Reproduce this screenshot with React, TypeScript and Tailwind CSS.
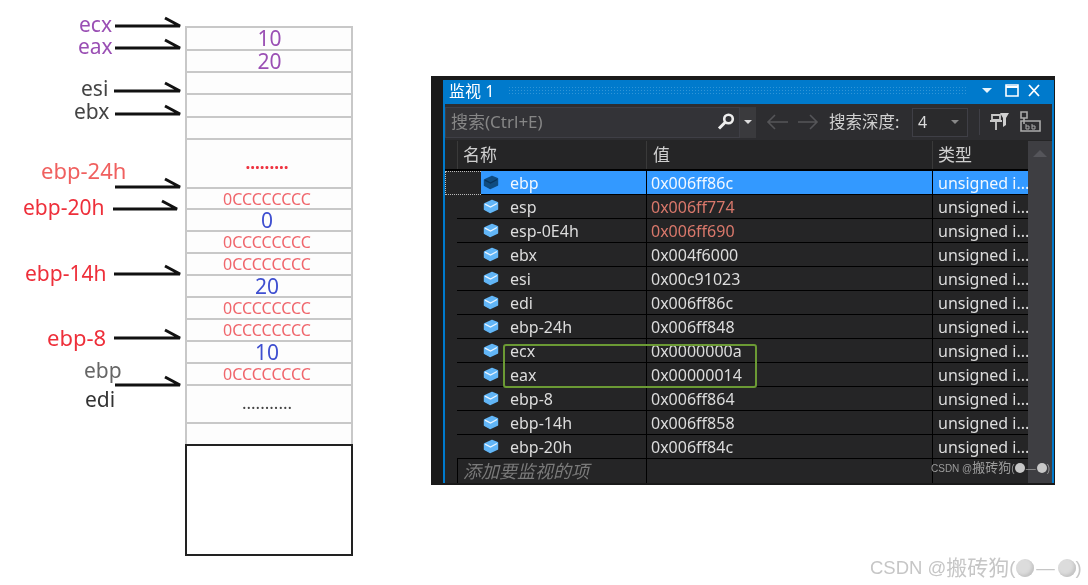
import React from "react";

const sans = "font-['Noto_Sans','Noto_Sans_CJK_SC',sans-serif]";

function Arrow({ y, x1 = 115, x2 = 180 }: { y: number; x1?: number; x2?: number }) {
  return (
    <svg className="absolute left-0 top-0" width="200" height="420" style={{ pointerEvents: "none" }}>
      <path d={`M${x1} ${y}H${x2}L${x2 - 15} ${y - 8}`} fill="none" stroke="#111" strokeWidth="3" />
    </svg>
  );
}

const labels: { t: string; cls: string }[] = [
  { t: "ecx", cls: "left-[79px] top-[14px] text-[21px] text-[#9a4fb4]" },
  { t: "eax", cls: "left-[78px] top-[36px] text-[21px] text-[#9a4fb4]" },
  { t: "esi", cls: "left-[81px] top-[78px] text-[21px] text-[#444]" },
  { t: "ebx", cls: "left-[74px] top-[101px] text-[21px] text-[#444]" },
  { t: "ebp-24h", cls: "left-[41px] top-[160px] text-[22px] text-[#f0605f]" },
  { t: "ebp-20h", cls: "left-[23px] top-[197px] text-[21px] text-[#ee2f3a]" },
  { t: "ebp-14h", cls: "left-[25px] top-[263px] text-[21px] text-[#ee2f3a]" },
  { t: "ebp-8", cls: "left-[47px] top-[327px] text-[22px] text-[#ee2f3a]" },
  { t: "ebp", cls: "left-[84px] top-[360px] text-[21px] text-[#666]" },
  { t: "edi", cls: "left-[85px] top-[389px] text-[21px] text-[#333]" },
];

type Cell = { h: string; t?: string; c?: string };
const CC = "0CCCCCCCC";
const red = "text-[#f0666c] text-[16px] pr-[4px]";
const blue = "text-[#3f4fd0] text-[21px] pr-[4px]";
const purple = "text-[#9a4fb4] text-[21px] pl-[1px]";
const cells: Cell[] = [
  { h: "h-[23px]", t: "10", c: purple },
  { h: "h-[22px]", t: "20", c: purple },
  { h: "h-[22px]" },
  { h: "h-[23px]" },
  { h: "h-[22px]" },
  { h: "h-[49px]", t: "·········", c: "text-[#ee3340] text-[17px] font-bold pt-[8px] pr-[4px]" },
  { h: "h-[21px]", t: CC, c: red },
  { h: "h-[22px]", t: "0", c: blue },
  { h: "h-[22px]", t: CC, c: red },
  { h: "h-[22px]", t: CC, c: red },
  { h: "h-[22px]", t: "20", c: blue },
  { h: "h-[22px]", t: CC, c: red },
  { h: "h-[22px]", t: CC, c: red },
  { h: "h-[22px]", t: "10", c: blue },
  { h: "h-[22px]", t: CC, c: red },
  { h: "h-[38px]", t: "···········", c: "text-[#444] text-[17px] pt-[6px] pr-[4px]" },
  { h: "h-[20px]" },
];

function Cube({ dark }: { dark?: boolean }) {
  const top = dark ? "#0f4c81" : "#62b6f7";
  return (
    <svg width="16" height="15" viewBox="0 0 16 15" className="shrink-0">
      <path d="M1.5 5 9 1.5l5.5 2.2V10L7 13.5l-5.5-3z" fill={top} stroke={top} strokeWidth="1.4" strokeLinejoin="round" />
      <path d="M2 5.2 7.5 8 14 4.5" fill="none" stroke={dark ? "#07345c" : "#e8f4ff"} strokeWidth="1.4" />
    </svg>
  );
}

const rows = [
  ["ebp", "0x006ff86c", ""],
  ["esp", "0x006ff774", "r"],
  ["esp-0E4h", "0x006ff690", "r"],
  ["ebx", "0x004f6000", ""],
  ["esi", "0x00c91023", ""],
  ["edi", "0x006ff86c", ""],
  ["ebp-24h", "0x006ff848", ""],
  ["ecx", "0x0000000a", ""],
  ["eax", "0x00000014", ""],
  ["ebp-8", "0x006ff864", ""],
  ["ebp-14h", "0x006ff858", ""],
  ["ebp-20h", "0x006ff84c", ""],
];

function Row({ name, value, flag, selected }: { name: string; value: string; flag: string; selected: boolean }) {
  const sel = selected ? "bg-[#3399ff]" : "";
  return (
    <div className={`flex h-[24px] items-center text-[16px] leading-none ${selected ? "text-[#f0f7ff]" : "text-[#dcdcdc]"}`}>
      {selected ? (
        <div className="w-[36px] h-full shrink-0 border-y border-l border-dotted border-[#bbb]" />
      ) : (
        <>
          <div className="w-[12px] h-full shrink-0" />
          <div className="w-[24px] h-full shrink-0 border-b border-black" />
        </>
      )}
      <div className={`flex items-center h-full w-[165px] shrink-0 border-b border-black ${sel}`}>
        <div className="w-[29px] flex pl-[2px]">
          <Cube dark={selected} />
        </div>
        <span>{name}</span>
      </div>
      <div className={`flex items-center h-full w-[286px] shrink-0 border-l border-b border-black pl-[4px] ${sel} ${flag ? "text-[#d9786b]" : ""}`}>
        {value}
      </div>
      <div className={`flex items-center h-full w-[96px] shrink-0 border-l border-b border-black pl-[5px] overflow-hidden whitespace-nowrap ${sel}`}>
        unsigned i...
      </div>
    </div>
  );
}

function Watermark({ big }: { big?: boolean }) {
  const dot = big
    ? "inline-block w-[18px] h-[18px] rounded-full bg-[#dcdcdc] shadow-[inset_-2px_-2px_3px_#c4c4c4]"
    : "inline-block w-[10px] h-[10px] rounded-full bg-[#c8c8c8]";
  return (
    <span
      className={`absolute flex items-center whitespace-nowrap ${
        big
          ? "left-[870px] top-[556px] h-[24px] text-[#c6c6c6] text-[18.5px]"
          : "left-[931px] top-[461px] h-[14px] text-[#9c9c9c] text-[10px]"
      } font-['Liberation_Sans','Noto_Sans_CJK_SC',sans-serif]`}
    >
      <span>CSDN @</span>
      <span className={big ? "text-[21px]" : "text-[13px]"}>搬砖狗</span>
      <span>(</span>
      <span className={dot} />
      <span className={big ? "w-[24px] text-center" : "w-[12px] text-center"}>—</span>
      <span className={dot} />
      <span>)</span>
    </span>
  );
}

export default function App() {
  return (
    <div className={`relative w-[1088px] h-[585px] overflow-hidden bg-white blur-[0.35px] ${sans}`}>
      {/* stack diagram */}
      {labels.map((l) => (
        <span key={l.t} className={`absolute leading-[20px] ${l.cls}`}>{l.t}</span>
      ))}
      <Arrow y={26} />
      <Arrow y={48} />
      <Arrow y={91} x1={114} />
      <Arrow y={114} />
      <Arrow y={187} />
      <Arrow y={209} x1={113} x2={177} />
      <Arrow y={274} x1={114} />
      <Arrow y={338} x1={114} />
      <Arrow y={385} />

      <div className="absolute left-[185px] top-[26px] w-[168px]">
        <div className="border-2 border-b-0 border-[#c8c8c8] bg-[#fdfdfd]">
          {cells.map((c, i) => (
            <div key={i} className={`${c.h} flex items-center justify-center leading-none border-b-2 border-[#c8c8c8] last:border-b-0 ${c.c ?? ""}`}>
              {c.t}
            </div>
          ))}
        </div>
        <div className="h-[112px] border-[2.5px] border-[#222] bg-white" />
      </div>

      {/* watch window */}
      <div className="absolute left-[431px] top-[76px] w-[624px] h-[409px] bg-[#1a1a1a] pt-[4px] pl-[12px] pr-[1px] pb-[2px]">
        <div className="h-full border-x-2 border-[#007acc] bg-[#2d2d30] flex flex-col">
          <div className="h-[24px] bg-[#007acc] flex items-center pl-[4px] pr-[1px] pb-[3px] text-white text-[16px] leading-none shrink-0">
            <span className="w-[48px] whitespace-nowrap shrink-0">监视 1</span>
            <div className="flex-1 ml-[11px] mr-[13px] h-[9px] bg-[radial-gradient(#2f95d8_1px,transparent_1px)] bg-[length:3px_3px]" />
            <svg width="70" height="16" viewBox="0 0 70 16" className="shrink-0">
              <path d="M1 5h10l-5 5z" fill="#e8f4fb" />
              <path d="M25 2h12v11H25z" fill="none" stroke="#fff" strokeWidth="1.6" />
              <path d="M25 3h12v2H25z" fill="#fff" />
              <path d="m48 2 10 11M58 2 48 13" stroke="#fff" strokeWidth="1.8" />
            </svg>
          </div>

          <div className="h-[37px] flex items-center shrink-0 text-[#9a9a9a] border-b border-[#252526]">
            <div className="w-[295px] h-[31px] flex items-center pl-[5px] bg-[#333337] border border-[#3f3f46] text-[#868686] text-[17px] shrink-0">
              <span className="flex-1">搜索(Ctrl+E)</span>
              <svg width="20" height="20" viewBox="0 0 20 20" className="mr-[3px]">
                <circle cx="12.5" cy="7" r="4.3" fill="none" stroke="#eee" strokeWidth="2.6" />
                <path d="M9.5 10 3 16.5" stroke="#eee" strokeWidth="3" />
              </svg>
            </div>
            <div className="w-[16px] h-[31px] bg-[#3a3a3d] flex items-center justify-center shrink-0">
              <svg width="8" height="4"><path d="M0 0h8L4 4z" fill="#ddd" /></svg>
            </div>
            <svg width="58" height="18" viewBox="0 0 58 18" className="ml-[10px] shrink-0">
              <path d="M22 9H2m7-7L2 9l7 7" fill="none" stroke="#555558" strokeWidth="1.6" />
              <path d="M32 9h19m-7-7 7 7-7 7" fill="none" stroke="#555558" strokeWidth="1.6" />
            </svg>
            <span className="ml-[5px] w-[73px] whitespace-nowrap text-[#d0d0d0] text-[16.5px] shrink-0">搜索深度:</span>
            <div className="ml-[10px] w-[56px] h-[29px] border border-[#3f3f46] bg-[#2a2a2c] flex items-center justify-between px-[5px] text-[#dcdcdc] text-[16px] shrink-0">
              <span>4</span>
              <svg width="8" height="4" className="mr-[3px]"><path d="M0 0h8L4 4z" fill="#888" /></svg>
            </div>
            <div className="ml-[11px] w-px h-[26px] bg-[#3f3f46] shrink-0" />
            <svg width="54" height="24" viewBox="0 0 54 24" className="ml-[10px] shrink-0">
              <path d="M2 5h8v5H2zM6 10v10M0 11h12" fill="none" stroke="#c8c8c8" strokeWidth="1.8" />
              <path d="M10 3h9l-3 5v7l-3 2V8z" fill="#d0d0d0" />
              <path d="M31 2h6v6h-6zM34 8v6" fill="none" stroke="#aaa" strokeWidth="1.6" />
              <path d="M31 11h19v10H31z" fill="none" stroke="#aaa" strokeWidth="1.6" />
              <path d="M36 14v5h3v-3h-3m6-2v5h3v-3h-3" fill="none" stroke="#aaa" strokeWidth="1" />
            </svg>
          </div>

          <div className="flex-1 flex bg-[#252526] min-h-0">
            <div className="w-[583px] flex flex-col shrink-0">
              <div className="h-[30px] flex items-center text-[#d0d0d0] text-[17px] border-b-2 border-black bg-[#252526] shrink-0">
                <div className="w-[12px] h-full shrink-0" />
                <div className="w-[189px] pl-[5px] h-full flex items-center border-l border-[#3a3a3a] shrink-0">名称</div>
                <div className="w-[286px] pl-[6px] h-full flex items-center border-l border-[#3a3a3a] shrink-0">值</div>
                <div className="flex-1 pl-[5px] h-full flex items-center border-l border-[#3a3a3a]">类型</div>
              </div>
              {rows.map((r, i) => (
                <Row key={r[0]} name={r[0]} value={r[1]} flag={r[2]} selected={i === 0} />
              ))}
              <div className="flex-1 flex text-[#7a7a7a] text-[18px] italic leading-none">
                <div className="w-[12px] shrink-0" />
                <div className="w-[189px] shrink-0 pl-[5px] flex items-center border-l border-black">添加要监视的项</div>
                <div className="w-[286px] shrink-0 border-l border-black" />
                <div className="flex-1 border-l border-black" />
              </div>
            </div>
            <div className="flex-1 bg-[#3e3e42] flex justify-center pt-[9px]">
              <svg width="14" height="7"><path d="M0 7h14L7 0z" fill="#55555a" /></svg>
            </div>
          </div>
        </div>
      </div>

      {/* highlight box over the rows */}
      <div className="absolute left-[503px] top-[344px] w-[254px] h-[44px] rounded-[3px] border-2 border-[#6b9a34]" />

      <Watermark />
      <Watermark big />
    </div>
  );
}
